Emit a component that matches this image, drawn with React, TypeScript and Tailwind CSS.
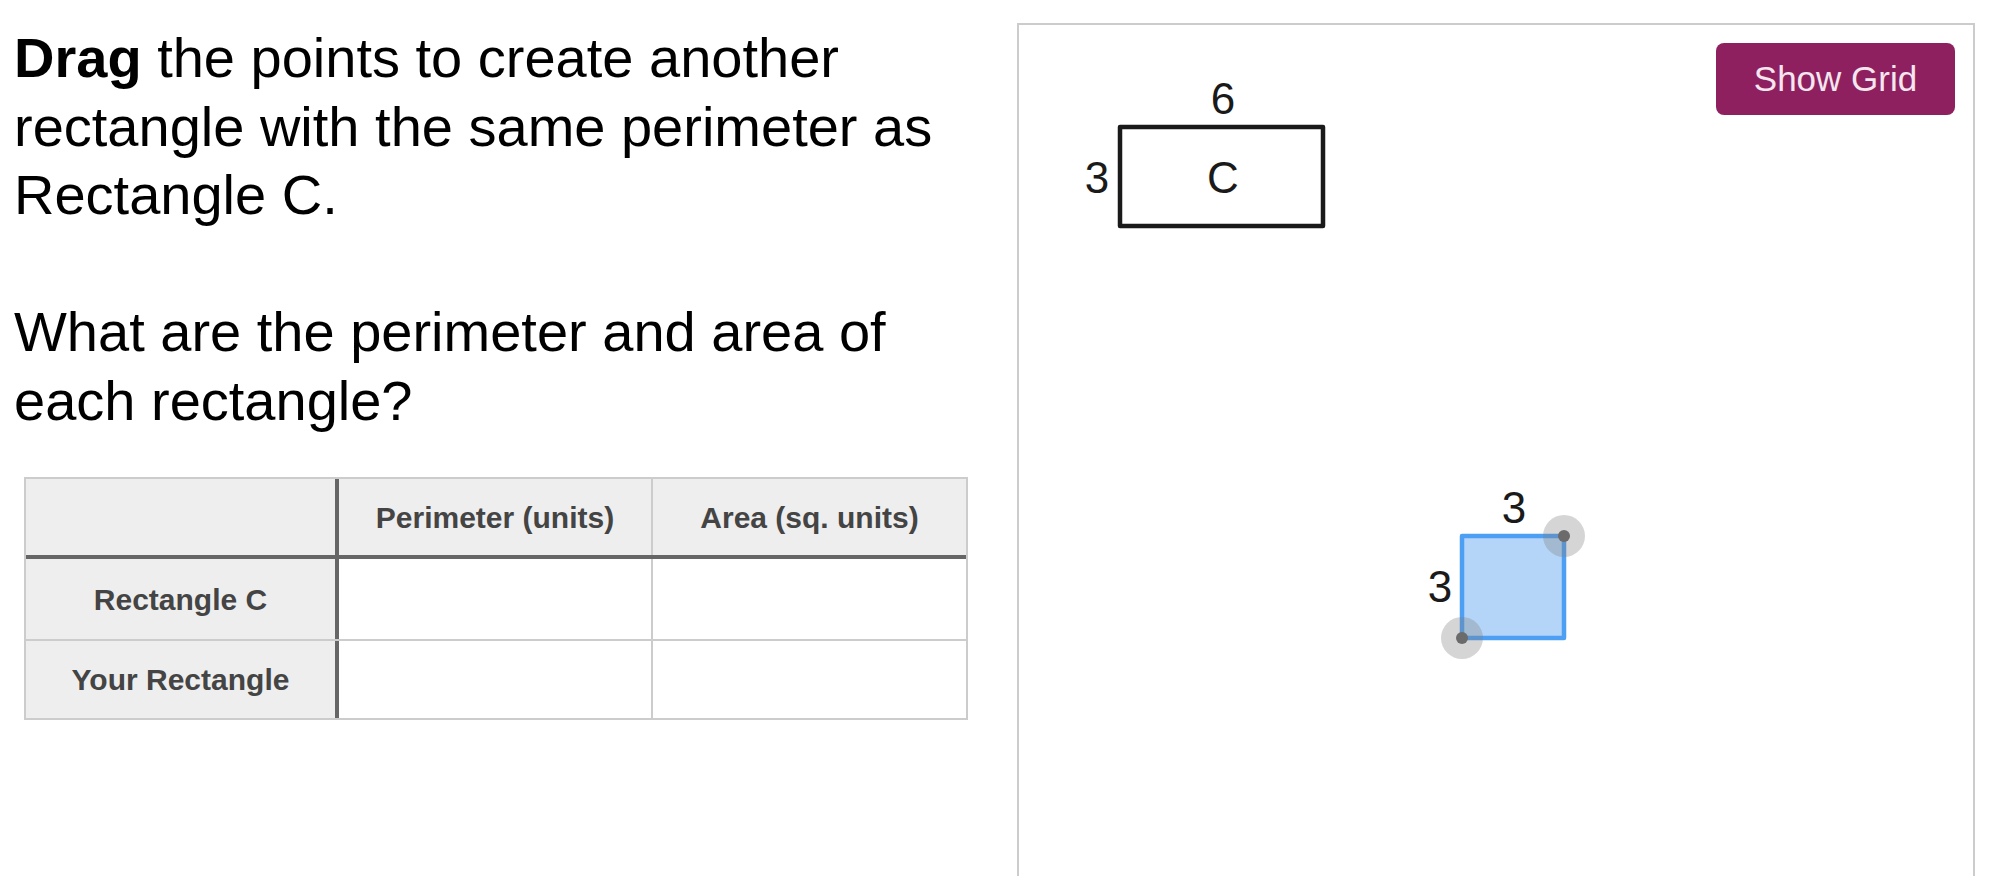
import React from 'react'

const font = { fontFamily: '"Liberation Sans", Arial, sans-serif' }

const Handle = ({ x, y }: { x: number; y: number }) => (
  <g>
    <circle cx={x} cy={y} r={21} fill="#7f7f7f" fillOpacity={0.33} />
    <circle cx={x} cy={y} r={6} fill="#6b6b6b" />
  </g>
)

const Canvas = () => (
  <svg className="absolute inset-0" width="954" height="900" style={font}>
    {/* Rectangle C */}
    <rect x={101} y={102} width={203} height={99} fill="none" stroke="#1a1a1a" strokeWidth={4.5} strokeLinejoin="round" />
    <text x={204} y={73} fontSize={44} fill="#1a1a1a" textAnchor="middle" dominantBaseline="central">6</text>
    <text x={78} y={152} fontSize={44} fill="#1a1a1a" textAnchor="middle" dominantBaseline="central">3</text>
    <text x={204} y={152} fontSize={44} fill="#1a1a1a" textAnchor="middle" dominantBaseline="central">C</text>

    {/* draggable rectangle */}
    <rect x={443} y={511} width={102} height={102} fill="#b4d5f8" stroke="#4d9ff4" strokeWidth={4.5} strokeLinejoin="round" />
    <text x={495} y={482} fontSize={44} fill="#1a1a1a" textAnchor="middle" dominantBaseline="central">3</text>
    <text x={421} y={561} fontSize={44} fill="#1a1a1a" textAnchor="middle" dominantBaseline="central">3</text>
    <Handle x={443} y={613} />
    <Handle x={545} y={511} />
  </svg>
)

const App = () => {
  return (
    <div className="flex h-[876px] w-[1990px] overflow-hidden bg-white" style={font}>
      {/* Left column */}
      <div className="w-[1017px] shrink-0 pl-[14px] pt-[24px]">
        <div className="w-[960px] text-[56px] leading-[68.5px] text-black">
          <p>
            <strong>Drag</strong> the points to create another rectangle with the same perimeter as Rectangle C.
          </p>
          <p className="mt-[68.5px]">What are the perimeter and area of each rectangle?</p>
        </div>

        <div className="ml-[10px] mt-[42px] w-[944px] border-2 border-[#ccc] text-[30px] font-bold text-[#444]">
          <div className="flex h-[80px] border-b-4 border-[#666] bg-[#eee]">
            <div className="w-[313px] border-r-4 border-[#666]" />
            <div className="flex w-[314px] items-center justify-center border-r-2 border-[#ccc]">Perimeter (units)</div>
            <div className="flex flex-1 items-center justify-center">Area (sq. units)</div>
          </div>
          <div className="flex h-[82px] border-b-2 border-[#ccc]">
            <div className="flex w-[313px] items-center justify-center border-r-4 border-[#666] bg-[#eee]">Rectangle C</div>
            <div className="w-[314px] border-r-2 border-[#ccc] bg-white" />
            <div className="flex-1 bg-white" />
          </div>
          <div className="flex h-[77px]">
            <div className="flex w-[313px] items-center justify-center border-r-4 border-[#666] bg-[#eee]">Your Rectangle</div>
            <div className="w-[314px] border-r-2 border-[#ccc] bg-white" />
            <div className="flex-1 bg-white" />
          </div>
        </div>
      </div>

      {/* Right panel */}
      <div className="relative mt-[23px] h-[900px] w-[958px] shrink-0 border-2 border-[#ccc]">
        <Canvas />
        <div className="relative flex justify-end pr-[18px] pt-[18px]">
          <button className="h-[72px] w-[239px] rounded-[8px] bg-[#8f2060] text-[35px] text-[#f3e6ee]">
            Show Grid
          </button>
        </div>
      </div>
    </div>
  )
}

export default App
